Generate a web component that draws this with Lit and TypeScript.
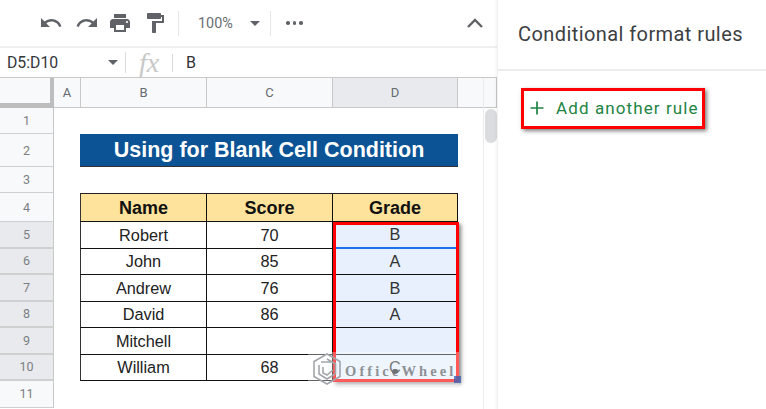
import { LitElement, html, css, svg } from "lit";
import { customElement } from "lit/decorators.js";

const ICONS: Record<string, string> = {
  undo: "M12.5 8c-2.65 0-5.05.99-6.9 2.6L2 7v9h9l-3.62-3.62c1.39-1.16 3.16-1.88 5.12-1.88 3.54 0 6.55 2.31 7.6 5.5l2.37-.78C21.08 11.03 17.15 8 12.5 8z",
  redo: "M18.4 10.6C16.55 8.99 14.15 8 11.5 8c-4.65 0-8.58 3.03-9.96 7.22L3.9 16c1.05-3.19 4.05-5.5 7.6-5.5 1.95 0 3.73.72 5.12 1.88L13 16h9V7l-3.6 3.6z",
  print: "M19 8H5c-1.66 0-3 1.34-3 3v6h4v4h12v-4h4v-6c0-1.66-1.34-3-3-3zm-3 11H8v-5h8v5zm3-7c-.55 0-1-.45-1-1s.45-1 1-1 1 .45 1 1-.45 1-1 1zm-1-9H6v4h12V3z",
  paint: "M18 4V3c0-.55-.45-1-1-1H5c-.55 0-1 .45-1 1v4c0 .55.45 1 1 1h12c.55 0 1-.45 1-1V6h1v4H9v11c0 .55.45 1 1 1h2c.55 0 1-.45 1-1v-9h8V4h-3z",
};

const icon = (n: string) => html`<svg class="ic ${n}" viewBox="0 0 24 24"><path d=${ICONS[n]}></path></svg>`;

const ROWS = [
  ["Robert", "70", "B"],
  ["John", "85", "A"],
  ["Andrew", "76", "B"],
  ["David", "86", "A"],
  ["Mitchell", "", ""],
  ["William", "68", "C"],
];

@customElement("app-root")
export class AppRoot extends LitElement {
  static styles = css`
    :host { display: block; width: 766px; height: 409px; overflow: hidden; background: #fff; font-family: Roboto, "Liberation Sans", sans-serif; }
    .page { display: flex; height: 409px; }
    .main { width: 497px; flex: none; display: flex; flex-direction: column; overflow: hidden; position: relative; }
    .panel { flex: 1; border-left: 1px solid #f1f1f1; box-shadow: -1px 0 3px rgba(0,0,0,.05); z-index: 2; background: #fff; }
    .toolbar { height: 46px; flex: none; display: flex; align-items: center; padding-left: 39px; border-bottom: 2px solid #eeeff0; box-sizing: content-box; }
    .ic { width: 24px; height: 24px; fill: #5f6368; flex: none; display: block; }
    .tools { display: flex; }
    .redo { margin-left: 12px; }
    .print { margin-left: 9px; }
    .paint { margin-left: 11px; }
    .tdiv { width: 1px; height: 25px; background: #e6e6e6; }
    .tdiv.a { margin-left: 11px; }
    .tdiv.b { margin-left: 10px; }
    .zoom { font-size: 14.4px; color: #6a6e72; margin-left: 19px; width: 52px; }
    .caret { width: 0; height: 0; border-left: 5px solid transparent; border-right: 5px solid transparent; border-top: 5px solid #5f6368; flex: none; }
    .caret.nb { margin-right: 7px; }
    .dots { display: flex; gap: 3px; margin-left: 15px; }
    .dots i { width: 3.6px; height: 3.6px; border-radius: 50%; background: #5f6368; }
    .chev { margin-left: auto; margin-right: 13px; width: 18px; height: 12px; stroke: #5f6368; stroke-width: 2.4; fill: none; }
    .fbar { height: 29px; flex: none; display: flex; align-items: center; border-bottom: 1px solid #c8c8c8; font-size: 14px; color: #3c4043; }
    .name { width: 108px; padding-left: 7px; box-sizing: border-box; color: #33373a; font-size: 15.8px; }
    .fbar .fdiv { width: 1px; height: 21px; background: #dadada; }
    .fbar .fdiv.s { height: 18px; }
    .fx { font-family: "Liberation Serif", serif; font-style: italic; font-size: 28px; color: #c8c8c8; width: 46px; text-align: center; line-height: 1; }
    .val { margin-left: 13px; font-size: 16px; color: #333; }
    .sheet { position: relative; flex: 1; display: grid; grid-template-columns: 54px 27px 126px 126px 125px 26px 13px; grid-template-rows: 30px 26px 33px 26px 29px repeat(7, 26.5px); }
    .corner { background: #f8f9fa; border-right: 4px solid #bdbdbd; border-bottom: 5px solid #bdbdbd; box-sizing: border-box; }
    .ch { background: #f8f9fa; border-right: 1px solid #c8c8c8; border-bottom: 1px solid #c8c8c8; display: flex; align-items: center; justify-content: center; font-size: 13px; color: #666b70; box-sizing: border-box; }
    .ch.sel { background: #e8eaed; }
    .rh { background: #f8f9fa; border-right: 1px solid #c8c8c8; border-bottom: 1px solid #d0d0d0; display: flex; align-items: center; justify-content: center; font-size: 12.5px; color: #7b7f83; box-sizing: border-box; }
    .rh.sel { background: #e8eaed; border-bottom-width: 2px; }
    .gap { grid-column: 2 / 8; background: #fff; }
    .gapA { grid-column: 2; }
    .title { grid-column: 3 / 6; margin-left: -1px; background: #0b5394; color: #fff; font: bold 21.5px "Liberation Sans", sans-serif; display: flex; align-items: center; justify-content: center; border-bottom: 1px solid #333; box-sizing: border-box; }
    .cell { font: 16.3px "Liberation Sans", sans-serif; color: #222; display: flex; align-items: center; justify-content: center; border-bottom: 1px solid #111; border-right: 1px solid #111; box-sizing: border-box; background: #fff; padding-top: 1px; }
    .cell.first { border-left: 1px solid #333; margin-left: -1px; }
    .cell.hd { background: #fde39b; font: bold 18px "Liberation Sans", sans-serif; color: #111; border-top: 1px solid #222; padding-top: 1px; }
    .cell.pick { background: #e7f0fc; color: #333; border-right: 1px solid #e7f0fc; }
    .cell.pick.c { align-items: flex-start; padding-top: 3px; }
    .cell.active { border-bottom: 2px solid #1a73e8; }
    .hole { grid-column: 6 / 8; }
    .thumb { position: absolute; left: 485px; top: 31px; width: 12px; height: 34px; border-radius: 6px; background: #dadce0; }
    .sideline { position: absolute; left: 483px; top: 0; bottom: 0; width: 1px; background: #ececec; }
    .redbox { position: absolute; left: 333px; top: 144px; width: 126px; height: 160px; box-sizing: border-box; border: 3px solid #f00; box-shadow: 2px 2px 4px rgba(0,0,0,.5); pointer-events: none; }
    .wm { position: absolute; left: 308px; top: 274px; width: 151px; height: 34px; background: rgba(255,255,255,.35); display: flex; align-items: center; gap: 3px; padding-left: 4px; box-sizing: border-box; }
    .wm svg { width: 30px; height: 34px; fill: none; stroke: #a2a6ab; stroke-width: 1.6; flex: none; }
    .wm span { font: bold 14.5px "Liberation Serif", serif; letter-spacing: 3.1px; color: #8d9196; padding-top: 5px; white-space: nowrap; }
    .dot { position: absolute; left: 392px; top: 291px; width: 6px; height: 5px; border-radius: 50%; background: #6d7074; }
    .handle { position: absolute; left: 454px; top: 298px; width: 7px; height: 7px; background: #3f5fb0; opacity: .8; }
    .ptitle { display: flex; align-items: center; padding-left: 20px; font-size: 20px; letter-spacing: .42px; color: #3c4043; border-bottom: 2px solid #ececec; padding-bottom: 2px; box-sizing: content-box; height: 67px; }
    .pbody { padding: 17px 0 0 23px; }
    .add { width: 184px; height: 41px; box-sizing: border-box; border: 3px solid #f00; box-shadow: 2px 2px 4px rgba(0,0,0,.5); display: flex; align-items: center; gap: 12px; padding: 0 0 2px 6px; color: #1e8343; font-size: 17px; letter-spacing: 1.1px; white-space: nowrap; }
    .add svg { width: 14px; height: 14px; stroke: #1e8343; stroke-width: 1.7; flex: none; }
  `;

  render() {
    const rowH = (n: number, sel = false) => html`<div class="rh ${sel ? "sel" : ""}">${n}</div>`;
    return html`<div class="page">
      <div class="main">
        <div class="toolbar">
          <div class="tools">${icon("undo")}${icon("redo")}${icon("print")}${icon("paint")}</div>
          <div class="tdiv a"></div>
          <div class="zoom">100%</div>
          <div class="caret"></div>
          <div class="tdiv b"></div>
          <div class="dots"><i></i><i></i><i></i></div>
          <svg class="chev" viewBox="0 0 18 12"><path d="M2 10 L9 3 L16 10"></path></svg>
        </div>
        <div class="fbar">
          <div class="name">D5:D10</div>
          <div class="caret nb"></div>
          <div class="fdiv"></div>
          <div class="fx">fx</div>
          <div class="fdiv s"></div>
          <div class="val">B</div>
        </div>
        <div class="sheet">
          <div class="corner"></div>
          <div class="ch">A</div><div class="ch">B</div><div class="ch">C</div><div class="ch sel">D</div><div class="ch"></div><div class="ch"></div>
          ${rowH(1)}<div class="gap"></div>
          ${rowH(2)}<div class="gapA"></div><div class="title">Using for Blank Cell Condition</div><div class="hole"></div>
          ${rowH(3)}<div class="gap"></div>
          ${rowH(4)}<div class="gapA"></div>
          <div class="cell hd first">Name</div><div class="cell hd">Score</div><div class="cell hd">Grade</div><div class="hole"></div>
          ${ROWS.map((r, i) => html`
            ${rowH(i + 5, true)}<div class="gapA"></div>
            <div class="cell first">${r[0]}</div><div class="cell">${r[1]}</div>
            <div class="cell pick ${i === 0 ? "active" : ""} ${i === 5 ? "c" : ""}">${r[2]}</div><div class="hole"></div>`)}
          ${rowH(11)}<div class="gap"></div>
          <div class="sideline"></div>
          <div class="thumb"></div>
          <div class="redbox"></div>
          <div class="wm">
            <svg viewBox="0 0 30 34">
              ${svg`<path d="M15 2 L28 9.5 V24.5 L15 32 L2 24.5 V9.5 Z"></path><path d="M15 7 L23.5 12 V22 M19 10 L9 10 M7 13 V22 L15 27 L23 22 M11 15 V21 L15 23 L21 18"></path>`}
            </svg>
            <span>OfficeWheel</span>
          </div>
          <div class="dot"></div>
          <div class="handle"></div>
        </div>
      </div>
      <div class="panel">
        <div class="ptitle">Conditional format rules</div>
        <div class="pbody">
          <div class="add">
            <svg viewBox="0 0 14 14"><path d="M7 0.5 V13.5 M0.5 7 H13.5"></path></svg>
            <span>Add another rule</span>
          </div>
        </div>
      </div>
    </div>`;
  }
}
